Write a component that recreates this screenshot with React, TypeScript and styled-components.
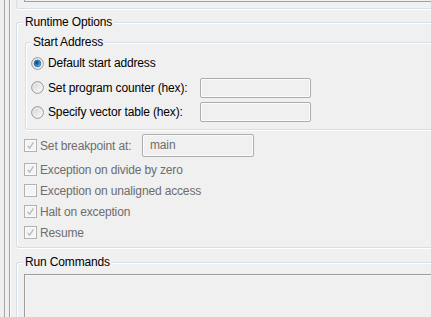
import { createGlobalStyle, styled } from "styled-components";

const GlobalStyle = createGlobalStyle`
  html, body {
    margin: 0;
    padding: 0;
    background: #f0f0f0;
    overflow: hidden;
  }
  body {
    font-family: "Liberation Sans", Arial, sans-serif;
    font-size: 12px;
    letter-spacing: -0.15px;
    color: #000;
  }
`;

const Frame = styled.div`
  box-sizing: border-box;
  width: calc(100% - 4px);
  height: 317px;
  margin-left: 4px;
  padding-left: 4px;
  border-left: 1px solid #a7a7a7;
  overflow: hidden;
`;

const Panel = styled.div`
  height: 100%;
  padding-left: 6px;
  border-left: 1px solid #a0a0a0;
  box-shadow: inset 1px 0 0 #ffffff;
  display: flex;
  flex-direction: column;
  overflow: hidden;

  > * {
    flex-shrink: 0;
  }
`;

const TopGroup = styled.div`
  height: 8px;
  padding-left: 7px;
  border: 1px solid #d5dfe5;
  border-top: none;
  border-right: none;
  border-radius: 0 0 0 3px;
  box-shadow: 0 1px 0 #ffffff;
`;

const TopText = styled.div`
  height: 1px;
  border-left: 1px solid #a0a0a0;
  border-bottom: 1px solid #a0a0a0;
`;

const Group = styled.section<{ $indent?: number; $top: number; $pad: string }>`
  position: relative;
  margin: ${(p) => p.$top}px 0 0 ${(p) => p.$indent ?? 0}px;
  padding: ${(p) => p.$pad};
  border: 1px solid #d5dfe5;
  border-right: none;
  border-radius: 3px 0 0 3px;
  box-shadow: inset 1px 1px 0 #ffffff, 0 1px 0 #ffffff;
`;

const Caption = styled.span<{ $left: number }>`
  position: absolute;
  top: -8px;
  left: ${(p) => p.$left}px;
  padding: 0 2px;
  line-height: 14px;
  background: #f0f0f0;
  white-space: nowrap;
`;

const RadioList = styled.div`
  display: flex;
  flex-direction: column;
  gap: 4.5px;
`;

const RadioRow = styled.label`
  height: 20px;
  padding-left: 5px;
  display: grid;
  grid-template-columns: 169px 111px;
  align-items: center;
`;

const CheckList = styled.div`
  margin-top: 4px;
  padding-left: 7px;
  display: flex;
  flex-direction: column;
  gap: 4px;
`;

const CheckRow = styled.label<{ $tall?: boolean }>`
  height: ${(p) => (p.$tall ? 23 : 17)}px;
  display: grid;
  grid-template-columns: 118px 112px;
  align-items: center;
  color: #6d6d6d;
`;

const Choice = styled.span`
  display: flex;
  align-items: center;
  gap: 4px;
  white-space: nowrap;

  svg {
    flex: none;
  }
`;

const CheckChoice = styled(Choice)`
  gap: 3px;
`;

const Field = styled.div<{ $h: number }>`
  box-sizing: border-box;
  height: ${(p) => p.$h}px;
  padding-left: 7px;
  border: 1px solid #adadad;
  border-radius: 2px;
  box-shadow: inset 0 0 0 1px #fbfbfb;
  color: #6d6d6d;
  line-height: ${(p) => p.$h - 2}px;
`;

const TextArea = styled.div`
  height: 80px;
  border: 1px solid #9c9c9c;
  border-right: none;
  box-shadow: inset 1px 1px 0 #f7f7f7;
`;

const Radio = ({ checked }: { checked?: boolean }) => (
  <svg width="13" height="13" viewBox="0 0 13 13">
    <defs>
      <linearGradient id="rFill" x1="0" y1="0" x2="1" y2="1">
        <stop offset="0" stopColor="#cfcfcf" />
        <stop offset="1" stopColor="#ffffff" />
      </linearGradient>
      <radialGradient id="rDot" cx="0.4" cy="0.4" r="0.6">
        <stop offset="0" stopColor="#0f3d6e" />
        <stop offset="0.55" stopColor="#2a7cc4" />
        <stop offset="1" stopColor="#6cc0f0" />
      </radialGradient>
    </defs>
    <circle cx="6.5" cy="6.5" r="5.8" fill="url(#rFill)" stroke="#8f9191" strokeWidth="1" />
    <circle cx="6.5" cy="6.5" r="4.6" fill="none" stroke="#f4f4f4" strokeWidth="0.8" />
    {checked && <circle cx="6.5" cy="6.5" r="3.4" fill="url(#rDot)" stroke="#1b4f86" strokeWidth="0.6" />}
  </svg>
);

const Check = ({ checked }: { checked?: boolean }) => (
  <svg width="13" height="13" viewBox="0 0 13 13">
    <rect x="0.5" y="0.5" width="12" height="12" fill="#f4f4f4" stroke="#b1b1b1" />
    <rect x="1.5" y="1.5" width="10" height="10" fill="none" stroke="#fbfbfb" />
    {checked && (
      <path d="M3.6 6.8 L5.6 9.2 L9.4 3.4" fill="none" stroke="#b8b8b8" strokeWidth="1.2" />
    )}
  </svg>
);

const radios = [
  { label: "Default start address", checked: true, field: false },
  { label: "Set program counter (hex):", field: true },
  { label: "Specify vector table (hex):", field: true },
];

const checks = [
  { label: "Exception on divide by zero", checked: true },
  { label: "Exception on unaligned access", checked: false },
  { label: "Halt on exception", checked: true },
  { label: "Resume", checked: true },
];

export default function App() {
  return (
    <>
      <GlobalStyle />
      <Frame>
        <Panel>
          <TopGroup>
            <TopText />
          </TopGroup>

          <Group $top={13} $pad="19px 0 6px 0">
            <Caption $left={6}>Runtime Options</Caption>
            <Group $top={0} $indent={8} $pad="10px 0 7px 0">
              <Caption $left={5}>Start Address</Caption>
              <RadioList>
                {radios.map((r) => (
                  <RadioRow key={r.label}>
                    <Choice>
                      <Radio checked={r.checked} />
                      {r.label}
                    </Choice>
                    {r.field && <Field $h={20} />}
                  </RadioRow>
                ))}
              </RadioList>
            </Group>
            <CheckList>
              <CheckRow $tall>
                <CheckChoice>
                  <Check checked />
                  Set breakpoint at:
                </CheckChoice>
                <Field $h={23}>main</Field>
              </CheckRow>
              {checks.map((c) => (
                <CheckRow key={c.label}>
                  <CheckChoice>
                    <Check checked={c.checked} />
                    {c.label}
                  </CheckChoice>
                </CheckRow>
              ))}
            </CheckList>
          </Group>

          <Group $top={14} $pad="11px 0 0 7px">
            <Caption $left={6}>Run Commands</Caption>
            <TextArea />
          </Group>
        </Panel>
      </Frame>
    </>
  );
}
